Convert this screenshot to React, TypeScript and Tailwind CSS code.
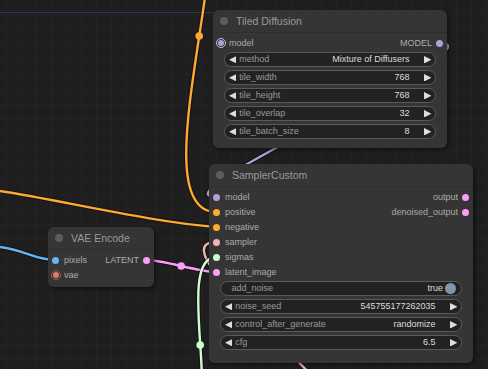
import React from "react";

// ComfyUI-style link spline: horizontal tangents, handle = 25% of distance
const spline = (x0: number, y0: number, x1: number, y1: number) => {
  const d = Math.hypot(x1 - x0, y1 - y0) * 0.25;
  return `M${x0} ${y0} C${x0 + d} ${y0} ${x1 - d} ${y1} ${x1} ${y1}`;
};

type Link = { d: string; color: string; mid?: [number, number] };

const LINKS: Link[] = [
  { d: "M340 430 C396 430 146 242 216.5 242", color: "#ECB4B4" },
  { d: spline(439.5, 43, 216.5, 197), color: "#B39DDB" },
  { d: spline(182, -140, 216.5, 212), color: "#FFA931", mid: [199.2, 36] },
  { d: "M0 191 C60 200 150 222 216.5 227", color: "#FFA931" },
  { d: "M0 247 C25 250 35 260 55.8 260", color: "#64B5F6" },
  { d: spline(146, 260, 216.5, 272), color: "#FF9CF9", mid: [181.2, 266] },
  { d: spline(184, 433, 216.5, 257), color: "#CDFFCD", mid: [200.2, 345] },
];

function Dot({ color, ring }: { color: string; ring?: string }) {
  if (ring) {
    return (
      <span className={`w-[10px] h-[10px] rounded-full border ${ring} flex items-center justify-center`}>
        <span className={`w-[6px] h-[6px] rounded-full ${color}`} />
      </span>
    );
  }
  return <span className={`w-[7px] h-[7px] rounded-full ${color}`} />;
}

type SlotDef = { label: string; color: string; ring?: string };

function Row({ left, right }: { left?: SlotDef; right?: SlotDef }) {
  return (
    <div className="h-[15px] flex items-center justify-between text-[9px] text-[#aaaaaa] leading-none">
      <div className="flex items-center">
        {left && (
          <>
            <span className="w-[15px] flex justify-center">
              <Dot color={left.color} ring={left.ring} />
            </span>
            <span className="ml-px">{left.label}</span>
          </>
        )}
      </div>
      <div className="flex items-center">
        {right && (
          <>
            <span>{right.label}</span>
            <span className="w-[15px] flex justify-center">
              <Dot color={right.color} ring={right.ring} />
            </span>
          </>
        )}
      </div>
    </div>
  );
}

function Tri({ dir }: { dir: "l" | "r" }) {
  return (
    <svg width="7.5" height="7.5" viewBox="0 0 10 10" className="shrink-0">
      <path d={dir === "l" ? "M10 0 L0 5 L10 10 Z" : "M0 0 L10 5 L0 10 Z"} fill="#dddddd" />
    </svg>
  );
}

function NumWidget({ label, value }: { label: string; value: string }) {
  return (
    <div className="h-[15px] rounded-full border border-[#5a5a5a] bg-[#222222] flex items-center pl-[3.5px] pr-[3.5px] text-[9px] leading-none">
      <Tri dir="l" />
      <span className="ml-[3px] flex-1 text-[#999999] whitespace-nowrap">{label}</span>
      <span className="text-[#dddddd] whitespace-nowrap">{value}</span>
      <span className="w-[14.25px]" />
      <Tri dir="r" />
    </div>
  );
}

function ToggleWidget({ label, value }: { label: string; value: string }) {
  return (
    <div className="h-[15px] rounded-full border border-[#5a5a5a] bg-[#222222] flex items-center pl-[10.25px] pr-[4.85px] text-[9px] leading-none">
      <span className="flex-1 text-[#999999]">{label}</span>
      <span className="text-[#dddddd]">{value}</span>
      <span className="ml-[2px] w-[11px] h-[11px] rounded-full bg-[#8494ae]" />
    </div>
  );
}

function Title({ text }: { text: string }) {
  return (
    <div className="h-[22.5px] flex items-center pl-[7px] border-b border-[#2e2e2e]">
      <span className="w-[8px] h-[8px] rounded-full bg-[#5c5c5c]" />
      <span className="ml-[8px] text-[10.5px] text-[#9a9a9a] leading-none whitespace-nowrap">{text}</span>
    </div>
  );
}

export default function App() {
  return (
    <div
      className="relative w-[488px] h-[369px] overflow-hidden bg-[#1e1e1e] [background-image:linear-gradient(to_right,#232323_1px,transparent_1px),linear-gradient(to_bottom,#232323_1px,transparent_1px)] [background-size:15px_15px] [background-position:6px_14px]"
      style={{ fontFamily: '"Liberation Sans", Arial, sans-serif' }}
    >
      {/* group edge */}
      <div className="absolute left-0 top-[12px] w-[214px] h-px bg-[#223a56]" />

      {/* links */}
      <svg className="absolute inset-0" width="488" height="369">
        {LINKS.map((l, i) => (
          <g key={i}>
            <path d={l.d} fill="none" stroke="rgba(0,0,0,0.4)" strokeWidth="4.5" />
            <path d={l.d} fill="none" stroke={l.color} strokeWidth="2.4" />
            {l.mid && <circle cx={l.mid[0]} cy={l.mid[1]} r="3.8" fill={l.color} />}
          </g>
        ))}
      </svg>

      {/* Tiled Diffusion */}
      <div className="absolute left-[213px] top-[10px] w-[234px] h-[138px] rounded-[6px] bg-[#353535] shadow-[2px_2px_4px_rgba(0,0,0,0.45)]">
        <Title text="Tiled Diffusion" />
        <div className="pt-[3px]">
          <Row
            left={{ label: "model", color: "bg-[#B39DDB]", ring: "border-[#c9b8ec]" }}
            right={{ label: "MODEL", color: "bg-[#B39DDB]" }}
          />
        </div>
        <div className="mt-[1.5px] px-[11.25px] flex flex-col gap-[3px]">
          <NumWidget label="method" value="Mixture of Diffusers" />
          <NumWidget label="tile_width" value="768" />
          <NumWidget label="tile_height" value="768" />
          <NumWidget label="tile_overlap" value="32" />
          <NumWidget label="tile_batch_size" value="8" />
        </div>
      </div>

      {/* SamplerCustom */}
      <div className="absolute left-[209px] top-[164px] w-[264px] h-[199px] rounded-[6px] bg-[#353535] shadow-[2px_2px_4px_rgba(0,0,0,0.45)]">
        <Title text="SamplerCustom" />
        <div className="pt-[3px]">
          <Row left={{ label: "model", color: "bg-[#B39DDB]" }} right={{ label: "output", color: "bg-[#FF9CF9]" }} />
          <Row left={{ label: "positive", color: "bg-[#FFA931]" }} right={{ label: "denoised_output", color: "bg-[#FF9CF9]" }} />
          <Row left={{ label: "negative", color: "bg-[#FFA931]" }} />
          <Row left={{ label: "sampler", color: "bg-[#ECB4B4]" }} />
          <Row left={{ label: "sigmas", color: "bg-[#CDFFCD]" }} />
          <Row left={{ label: "latent_image", color: "bg-[#FF9CF9]" }} />
        </div>
        <div className="mt-[1.5px] px-[11.25px] flex flex-col gap-[3px]">
          <ToggleWidget label="add_noise" value="true" />
          <NumWidget label="noise_seed" value="545755177262035" />
          <NumWidget label="control_after_generate" value="randomize" />
          <NumWidget label="cfg" value="6.5" />
        </div>
      </div>

      {/* VAE Encode */}
      <div className="absolute left-[48px] top-[227px] w-[106px] h-[60px] rounded-[6px] bg-[#353535] shadow-[2px_2px_4px_rgba(0,0,0,0.45)]">
        <Title text="VAE Encode" />
        <div className="pt-[3px]">
          <Row left={{ label: "pixels", color: "bg-[#64B5F6]" }} right={{ label: "LATENT", color: "bg-[#FF9CF9]" }} />
          <Row left={{ label: "vae", color: "bg-[#e07a6a]", ring: "border-[#9a6038]" }} />
        </div>
      </div>
    </div>
  );
}
